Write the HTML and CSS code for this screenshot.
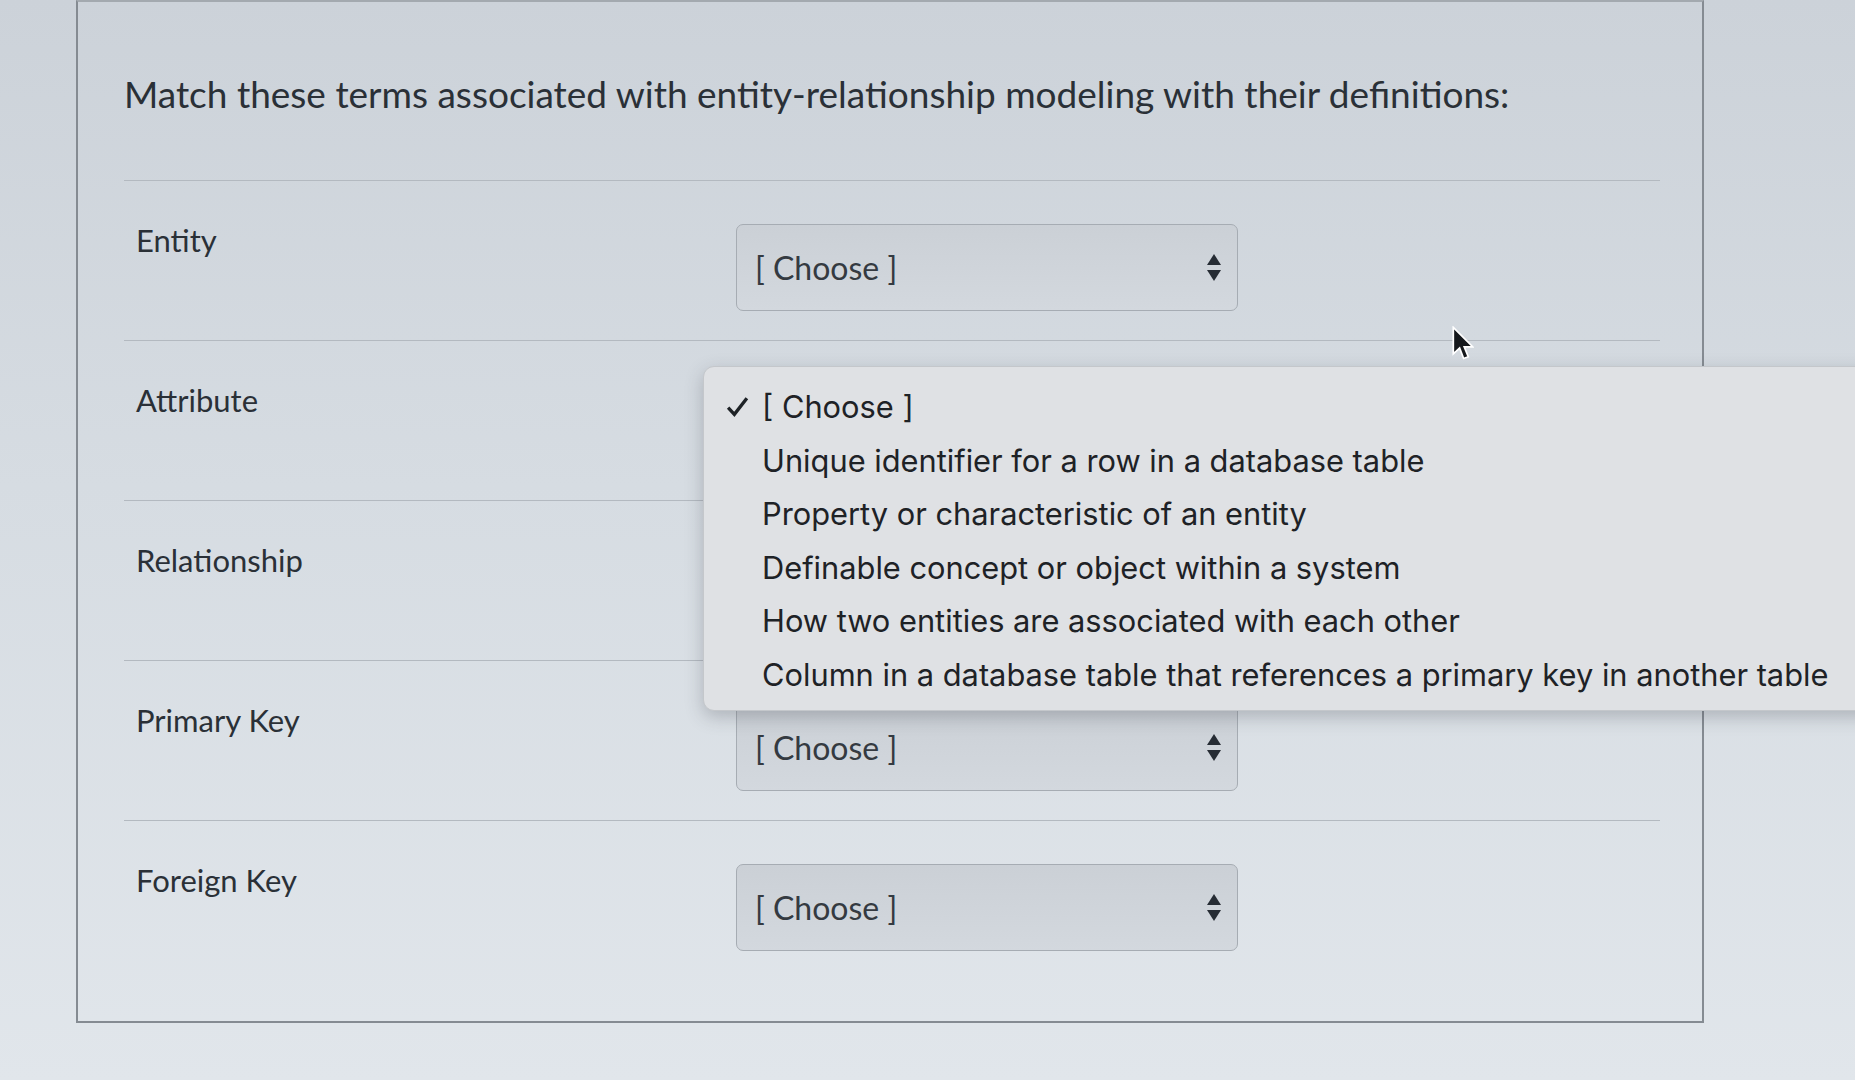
FILE: index.html
```html
<!DOCTYPE html>
<html>
<head>
  <title>Matching Question</title>
  <link rel="stylesheet" href="styles.css">
</head>
<body>
  <div class="page">
    <!-- Question card -->
    <div class="card">
      <p class="question">Match these terms associated with entity-relationship modeling with their definitions:</p>
      <div class="match-row">
        <div class="term">Entity</div>
        <div class="choose"><span>[ Choose ]</span><svg class="updown" viewBox="0 0 16 32"><path d="M8 2 L15 13 L1 13 Z"/><path d="M1 18 L15 18 L8 29 Z"/></svg></div>
      </div>
      <div class="match-row">
        <div class="term">Attribute</div>
        <!-- hidden behind the open menu -->
        <div class="choose covered"><span>[ Choose ]</span><svg class="updown" viewBox="0 0 16 32"><path d="M8 2 L15 13 L1 13 Z"/><path d="M1 18 L15 18 L8 29 Z"/></svg></div>
      </div>
      <div class="match-row">
        <div class="term">Relationship</div>
        <div class="choose covered"><span>[ Choose ]</span><svg class="updown" viewBox="0 0 16 32"><path d="M8 2 L15 13 L1 13 Z"/><path d="M1 18 L15 18 L8 29 Z"/></svg></div>
      </div>
      <div class="match-row">
        <div class="term">Primary Key</div>
        <div class="choose"><span>[ Choose ]</span><svg class="updown" viewBox="0 0 16 32"><path d="M8 2 L15 13 L1 13 Z"/><path d="M1 18 L15 18 L8 29 Z"/></svg></div>
      </div>
      <div class="match-row last">
        <div class="term">Foreign Key</div>
        <div class="choose"><span>[ Choose ]</span><svg class="updown" viewBox="0 0 16 32"><path d="M8 2 L15 13 L1 13 Z"/><path d="M1 18 L15 18 L8 29 Z"/></svg></div>
      </div>
    </div>

    <!-- Open dropdown menu -->
    <ul class="menu">
      <li class="checked"><svg class="tick" viewBox="0 0 24 24"><path d="M3 13 L9 19.5 L21 4"/></svg>[ Choose ]</li>
      <li>Unique identifier for a row in a database table</li>
      <li>Property or characteristic of an entity</li>
      <li>Definable concept or object within a system</li>
      <li>How two entities are associated with each other</li>
      <li>Column in a database table that references a primary key in another table</li>
    </ul>

    <!-- Mouse pointer -->
    <svg class="pointer" viewBox="0 0 20 30"><path d="M2 1 L2 24 L7.5 19 L11 28 L15 26.5 L11.5 18 L19 18 Z"/></svg>
  </div>
</body>
</html>
```

FILE: styles.css
```css
html, body {
  margin: 0;
  overflow: hidden;
}
body {
  background: linear-gradient(180deg, #ccd2d9 0%, #d6dce2 45%, #e1e6eb 100%);
  font-family: Lato, "Open Sans", sans-serif;
  color: #2a3037;
}
.page {
  position: relative;
  width: 1855px;
  height: 1080px;
}
.card {
  margin-left: 76px;
  width: 1628px;
  box-sizing: border-box;
  padding: 70px 42px 40px 46px;
  border: 2px solid #858b92;
  border-top-color: #a3a9af;
}
.question {
  margin: 0;
  padding-bottom: 64px;
  font-size: 37px;
  line-height: 44px;
  border-bottom: 1px solid #b3b9c0;
}
.match-row {
  display: flex;
  align-items: flex-start;
  height: 160px;
  box-sizing: border-box;
  padding: 40px 0 0 12px;
  border-bottom: 1px solid #b3b9c0;
}
.match-row.last {
  border-bottom: none;
}
.term {
  width: 600px;
  font-size: 31px;
  line-height: 38px;
}
.choose {
  display: flex;
  align-items: center;
  justify-content: space-between;
  width: 502px;
  height: 87px;
  margin-top: 3px;
  box-sizing: border-box;
  padding: 0 15px 0 18px;
  background: linear-gradient(180deg, #cbd0d6, #d3d8de);
  border: 1.5px solid #a6acb3;
  border-radius: 7px;
  font-size: 32px;
  color: #343a41;
}
.choose.covered {
  visibility: hidden;
}
.updown {
  width: 16px;
  height: 32px;
  fill: #262c34;
}
.menu {
  position: absolute;
  left: 703px;
  top: 366px;
  width: 1220px;
  margin: 0;
  padding: 13px 0 9px 0;
  list-style: none;
  background: #dfe1e4;
  border: 1px solid #c4c7cb;
  border-radius: 11px;
  box-shadow: 0 6px 18px rgba(60, 66, 74, 0.28);
  font-family: Inter, Roboto, sans-serif;
  font-size: 30.8px;
  line-height: 53.5px;
  color: #1e2226;
}
.menu li {
  position: relative;
  padding-left: 58px;
  white-space: nowrap;
}
.tick {
  position: absolute;
  left: 21px;
  top: 14px;
  width: 25px;
  height: 25px;
  fill: none;
  stroke: #1e2226;
  stroke-width: 3.2;
}
.pointer {
  position: absolute;
  left: 1451px;
  top: 326px;
  width: 23px;
  height: 35px;
  fill: #15181c;
  stroke: #ffffff;
  stroke-width: 1.5;
}
```
